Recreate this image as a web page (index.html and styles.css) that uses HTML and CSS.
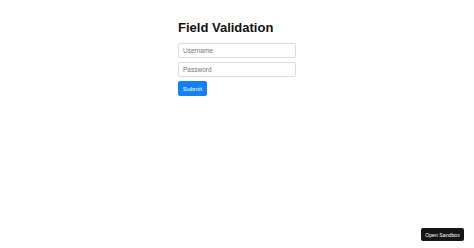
FILE: index.html
```html
<!DOCTYPE html>
<html>
<head>
<meta charset="utf-8">
<link rel="stylesheet" href="styles.css">
</head>
<body>
<main class="wrap">
  <h1 class="title">Field Validation</h1>
  <form class="form">
    <input class="field" type="text" placeholder="Username">
    <input class="field" type="password" placeholder="Password">
    <button class="submit" type="button">Submit</button>
  </form>
</main>
<a class="sandbox">Open Sandbox</a>
</body>
</html>
```
FILE: styles.css
```css
html, body {
  margin: 0;
  background: #fff;
  font-family: "Liberation Sans", Arial, sans-serif;
}
.wrap {
  width: 118px;
  margin: 0 auto;
  padding-top: 20px;
}
.title {
  margin: 0 0 7px 0;
  font-size: 13px;
  line-height: 16px;
  font-weight: 700;
  color: #111;
}
.form {
  display: flex;
  flex-direction: column;
  align-items: flex-start;
  gap: 4px;
}
.field {
  box-sizing: border-box;
  width: 118px;
  height: 15px;
  margin: 0;
  padding: 0 4px;
  border: 1px solid #dcdcdc;
  border-radius: 2px;
  font-family: inherit;
  font-size: 6.5px;
  color: #333;
  outline: none;
}
.field::placeholder {
  color: #777;
}
.submit {
  display: block;
  box-sizing: border-box;
  height: 15px;
  width: 29px;
  padding: 0;
  margin: 0;
  border: none;
  border-radius: 2px;
  background: #1380f4;
  color: #fff;
  font-family: inherit;
  font-size: 6.2px;
}
.sandbox {
  position: fixed;
  right: 10px;
  bottom: 7px;
  width: 43px;
  height: 13px;
  box-sizing: border-box;
  display: flex;
  align-items: center;
  justify-content: center;
  background: #151515;
  border-radius: 2px;
  color: #fff;
  font-size: 5.2px;
}
```
